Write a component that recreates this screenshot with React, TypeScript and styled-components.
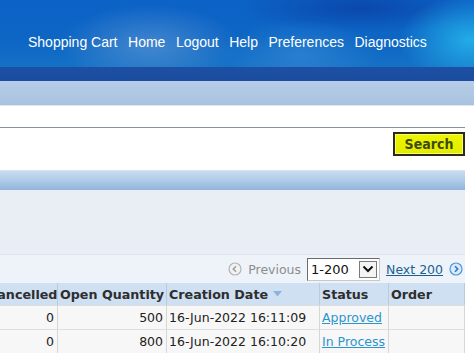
import React from 'react'
import styled, { createGlobalStyle } from 'styled-components'

const GlobalStyle = createGlobalStyle`
  html, body {
    margin: 0;
    padding: 0;
    background: #ffffff;
    overflow: hidden;
  }
  body {
    font-family: 'DejaVu Sans', sans-serif;
  }
`

const PageStyled = styled.div`
  width: 474px;
  height: 353px;
  overflow: hidden;
`

const BrandingStyled = styled.div`
  height: 67px;
  display: flex;
  align-items: center;
  gap: 10.5px;
  padding: 16px 0 0 28px;
  box-sizing: border-box;
  background:
    radial-gradient(ellipse 90px 40px at 150px 45px, rgba(110, 160, 215, 0.55), transparent),
    radial-gradient(ellipse 80px 35px at 300px 55px, rgba(70, 150, 220, 0.45), transparent),
    radial-gradient(ellipse 70px 45px at 470px 40px, rgba(40, 190, 240, 0.8), transparent),
    radial-gradient(ellipse 120px 25px at 360px 8px, rgba(10, 60, 160, 0.7), transparent),
    linear-gradient(180deg, #0c62c6 0%, #0d66c4 60%, #1571c6 100%);
`

const NavLinkStyled = styled.a`
  font-family: 'Liberation Sans', Arial, sans-serif;
  font-size: 14px;
  color: #ffffff;
  text-decoration: none;
  white-space: nowrap;
`

const DarkBarStyled = styled.div`
  height: 14px;
  background: linear-gradient(180deg, #1d4fa2, #1a4c9f);
`

const LightBarStyled = styled.div`
  height: 24px;
  background: linear-gradient(180deg, #b7cde6 0%, #a8c3e0 100%);
  border-bottom: 1px solid #dfe8f2;
`

const ContentStyled = styled.div`
  width: 465px;
`

const TitleGapStyled = styled.div`
  height: 21px;
  border-bottom: 1px solid #8690a0;
`

const SearchRowStyled = styled.div`
  height: 42px;
  display: flex;
  justify-content: flex-end;
  align-items: flex-start;
  padding-top: 4px;
  box-sizing: border-box;
`

const SearchButtonStyled = styled.button`
  width: 72px;
  height: 24px;
  margin: 0;
  padding: 0;
  border: 2px solid #2b2b1a;
  background: linear-gradient(180deg, #eef400 0%, #e2ec00 100%);
  box-shadow: inset 0 0 0 1px #f6fb70;
  font-family: 'DejaVu Sans Condensed', 'DejaVu Sans', sans-serif;
  font-weight: bold;
  font-size: 14px;
  color: #3e4a08;
`

const SectionBarStyled = styled.div`
  height: 20px;
  background: linear-gradient(180deg, #c9dcf0 0%, #afcbe7 50%, #90b5da 100%);
  border-top: 1px solid #d5e2ef;
  box-sizing: border-box;
`

const FillerStyled = styled.div`
  height: 64px;
  background: #e9eef5;
  border-bottom: 1px solid #dde4ee;
`

const TableWrapStyled = styled.div`
  display: flex;
  flex-direction: column;
  background: #eef3fa;
`

const PagerStyled = styled.div`
  height: 28px;
  display: flex;
  align-items: center;
  justify-content: flex-end;
  gap: 6px;
  padding-right: 2px;
  font-size: 12.5px;
`

const PagerTextStyled = styled.span<{ $link?: boolean }>`
  color: ${(p) => (p.$link ? '#1b5f90' : '#8c8c8c')};
  text-decoration: ${(p) => (p.$link ? 'underline' : 'none')};
  white-space: nowrap;
`

const SelectStyled = styled.div`
  width: 73px;
  height: 23px;
  display: flex;
  align-items: center;
  justify-content: space-between;
  box-sizing: border-box;
  border: 1px solid #6b6b6b;
  border-right-color: #c8c8c8;
  border-bottom-color: #c8c8c8;
  background: #ffffff;
  padding: 0 2px 0 3px;
  font-size: 13px;
  color: #111111;
`

const SelectArrowStyled = styled.div`
  width: 18px;
  height: 17px;
  display: flex;
  align-items: center;
  justify-content: center;
  border: 1px solid #7a7a7a;
  box-sizing: border-box;
  background: #f4f4f4;
`

const GridClipStyled = styled.div`
  display: flex;
  justify-content: flex-end;
  overflow: hidden;
`

const GridStyled = styled.div`
  flex-shrink: 0;
  display: grid;
  grid-template-columns: 72px 109px 153px 69px 76px;
`

const HeadCellStyled = styled.div`
  height: 22px;
  display: flex;
  align-items: center;
  gap: 5px;
  padding: 0 2px;
  box-sizing: border-box;
  background: #cfe0f2;
  border-right: 1px solid #b9cbe0;
  font-weight: bold;
  font-size: 12.7px;
  color: #2e2e2e;
  white-space: nowrap;
`

const CellStyled = styled.div<{ $align?: 'left' | 'right' }>`
  height: 24px;
  display: flex;
  align-items: center;
  justify-content: ${(p) => (p.$align === 'right' ? 'flex-end' : 'flex-start')};
  padding: 0 3px 0 2px;
  box-sizing: border-box;
  background: #f7f7f7;
  border-right: 1px solid #d6d6d6;
  border-top: 1px solid #dedede;
  font-size: 12.5px;
  color: #222222;
  white-space: nowrap;
`

const StatusLinkStyled = styled.a`
  color: #2a95cc;
  text-decoration: underline;
`

const CircleIcon = ({ dir, active }: { dir: 'left' | 'right'; active?: boolean }) => (
  <svg width='14' height='14' viewBox='0 0 14 14'>
    <circle
      cx='7'
      cy='7'
      r='6'
      fill={active ? '#dbeafa' : '#f2f2f2'}
      stroke={active ? '#4d95d8' : '#b4b4b4'}
      strokeWidth='1.2'
    />
    <path
      d={dir === 'left' ? 'M8 4.2 L5.3 7 L8 9.8' : 'M6 4.2 L8.7 7 L6 9.8'}
      fill='none'
      stroke={active ? '#2a78c8' : '#a0a0a0'}
      strokeWidth='1.6'
    />
  </svg>
)

const rows = [
  { cancelled: '0', open: '500', date: '16-Jun-2022 16:11:09', status: 'Approved' },
  { cancelled: '0', open: '800', date: '16-Jun-2022 16:10:20', status: 'In Process' },
]

const navItems = ['Shopping Cart', 'Home', 'Logout', 'Help', 'Preferences', 'Diagnostics']

const App = () => {
  return (
    <PageStyled>
      <GlobalStyle />
      <BrandingStyled>
        {navItems.map((item) => (
          <NavLinkStyled key={item}>{item}</NavLinkStyled>
        ))}
      </BrandingStyled>
      <DarkBarStyled />
      <LightBarStyled />
      <ContentStyled>
        <TitleGapStyled />
        <SearchRowStyled>
          <SearchButtonStyled>Search</SearchButtonStyled>
        </SearchRowStyled>
        <SectionBarStyled />
        <FillerStyled />
        <TableWrapStyled>
          <PagerStyled>
            <CircleIcon dir='left' />
            <PagerTextStyled>Previous</PagerTextStyled>
            <SelectStyled>
              <span>1-200</span>
              <SelectArrowStyled>
                <svg width='12' height='8' viewBox='0 0 12 8'>
                  <path d='M1.5 1.5 L6 6 L10.5 1.5' fill='none' stroke='#111' strokeWidth='2' />
                </svg>
              </SelectArrowStyled>
            </SelectStyled>
            <PagerTextStyled $link>Next 200</PagerTextStyled>
            <CircleIcon dir='right' active />
          </PagerStyled>
          <GridClipStyled>
            <GridStyled>
              <HeadCellStyled>Cancelled</HeadCellStyled>
              <HeadCellStyled>Open Quantity</HeadCellStyled>
              <HeadCellStyled>
                Creation Date
                <svg width='9' height='6' viewBox='0 0 9 6'>
                  <path d='M0 0 L9 0 L4.5 5.5 Z' fill='#8db4dd' />
                </svg>
              </HeadCellStyled>
              <HeadCellStyled>Status</HeadCellStyled>
              <HeadCellStyled>Order</HeadCellStyled>
              {rows.map((row) => (
                <React.Fragment key={row.date}>
                  <CellStyled $align='right'>{row.cancelled}</CellStyled>
                  <CellStyled $align='right'>{row.open}</CellStyled>
                  <CellStyled>{row.date}</CellStyled>
                  <CellStyled>
                    <StatusLinkStyled>{row.status}</StatusLinkStyled>
                  </CellStyled>
                  <CellStyled />
                </React.Fragment>
              ))}
            </GridStyled>
          </GridClipStyled>
        </TableWrapStyled>
      </ContentStyled>
    </PageStyled>
  )
}

export default App
